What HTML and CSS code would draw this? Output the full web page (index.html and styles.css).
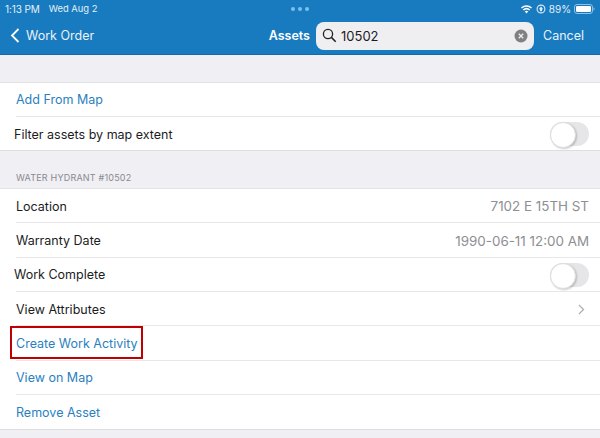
FILE: index.html
```html
<!DOCTYPE html>
<html lang="en">
<head>
<meta charset="utf-8">
<title>Assets</title>
<link rel="stylesheet" href="styles.css">
</head>
<body>
<header class="header">
  <div class="status">
    <div class="status-left"><span class="time">1:13 PM</span><span>Wed Aug 2</span></div>
    <div class="dots"><i></i><i></i><i></i></div>
    <div class="status-right">
      <svg class="wifi" width="11" height="9" viewBox="0 0 11 9"><path d="M5.500 8.600 3.800 6.600a2.600 2.600 0 0 1 3.400 0zM2.900 5.600 1.800 4.400a5.600 5.600 0 0 1 7.400 0L8.100 5.600a4 4 0 0 0-5.200 0zM.9 3.500 0 2.400a8.400 8.400 0 0 1 11 0l-.9 1.100a7 7 0 0 0-9.200 0z" fill="#fff"/></svg>
      <svg width="10" height="10" viewBox="0 0 10 10"><circle cx="5" cy="5" r="3.900" fill="none" stroke="#dcebf6" stroke-width="1.100"/><path d="M5 2.500 7.200 5.200H6V7.200H4V5.200H2.800z" fill="#dcebf6"/></svg>
      <span class="pct">89%</span>
      <svg width="21" height="10" viewBox="0 0 21 10"><rect x=".5" y=".5" width="18" height="9" rx="2.500" fill="none" stroke="#8fc0e2"/><rect x="2" y="2" width="15" height="6" rx="1.200" fill="#fff"/><path d="M19.500 3.500c.8.200 1 .8 1 1.500s-.2 1.300-1 1.500z" fill="#8fc0e2"/></svg>
    </div>
  </div>
  <nav class="nav">
    <a class="back">
      <svg width="10" height="15" viewBox="0 0 10 15"><path d="M8.500 1 2 7.500 8.500 14" fill="none" stroke="#fff" stroke-width="1.800"/></svg>
      <span>Work Order</span>
    </a>
    <div class="nav-right">
      <strong class="title">Assets</strong>
      <div class="search">
        <svg width="15" height="15" viewBox="0 0 15 15"><circle cx="6" cy="6" r="4.600" fill="none" stroke="#222" stroke-width="1.300"/><path d="m9.400 9.400 4.300 4.300" stroke="#222" stroke-width="1.500"/></svg>
        <span class="query">10502</span>
        <svg class="clear" width="14" height="14" viewBox="0 0 14 14"><circle cx="7" cy="7" r="6.500" fill="#808080"/><path d="m4.800 4.800 4.400 4.400m0-4.400-4.400 4.400" stroke="#eee" stroke-width="1.300"/></svg>
      </div>
      <span class="cancel">Cancel</span>
    </div>
  </nav>
</header>
<main class="content">
  <section class="group first">
    <div class="row"><span class="link">Add From Map</span></div>
    <div class="row tight"><span>Filter assets by map extent</span><span class="switch"></span></div>
  </section>
  <h2 class="caption">WATER HYDRANT #10502</h2>
  <section class="group">
    <div class="row"><span>Location</span><span class="value">7102 E 15TH ST</span></div>
    <div class="row"><span>Warranty Date</span><span class="value">1990-06-11 12:00 AM</span></div>
    <div class="row tight"><span>Work Complete</span><span class="switch"></span></div>
    <div class="row"><span>View Attributes</span>
      <svg class="chev" width="7" height="11" viewBox="0 0 7 11"><path d="m1 1 4.500 4.500L1 10" fill="none" stroke="#b0b0b4" stroke-width="1.300"/></svg>
    </div>
    <div class="row"><span class="link highlight">Create Work Activity</span></div>
    <div class="row"><span class="link">View on Map</span></div>
    <div class="row"><span class="link">Remove Asset</span></div>
  </section>
</main>
</body>
</html>
```
FILE: styles.css
```css
* { box-sizing: border-box; }
html, body { margin: 0; height: 100%; }
body {
  width: 600px;
  height: 438px;
  overflow: hidden;
  background: #efeff4;
  font-family: Inter, "Liberation Sans", sans-serif;
  font-size: 12.5px;
  color: #1c1c1e;
}
.header {
  height: 55px;
  background: #187bbf;
  border-bottom: 1px solid #1669a6;
  color: #fff;
  display: flex;
  flex-direction: column;
}
.status {
  height: 17px;
  padding: 1px 5px 0 5px;
  display: grid;
  grid-template-columns: 1fr auto 1fr;
  align-items: center;
  font-size: 9.4px;
  color: #e4f0f8;
}
.status-left { display: flex; gap: 9px; }
.time { font-size: 10px; letter-spacing: -.1px; }
.pct { font-size: 10px; }
.dots { display: flex; gap: 3px; }
.dots i { width: 4px; height: 4px; border-radius: 50%; background: #7cc0ee; }
.status-right { display: flex; justify-content: flex-end; align-items: center; gap: 3px; }
.wifi { margin-right: 1px; }
.nav {
  flex: 1;
  display: flex;
  justify-content: space-between;
  align-items: center;
  padding: 0 16px 0 10px;
}
.back { display: flex; align-items: center; gap: 6px; font-size: 12.5px; color: #e8f2f9; }
.nav-right { display: flex; align-items: center; }
.title { font-weight: 600; font-size: 12.5px; margin-right: 6px; }
.search {
  width: 218px;
  height: 28px;
  border-radius: 8px;
  background: #efeff2;
  display: flex;
  align-items: center;
  padding: 0 6px;
  gap: 4px;
  color: #1c1c1e;
  font-size: 13px;
}
.query { flex: 1; }
.cancel { margin-left: 9px; font-size: 12.5px; color: #e8f2f9; }
.content { display: flex; flex-direction: column; }
.group { background: #fff; border-top: 1px solid #e2e2e6; border-bottom: 1px solid #dedee2; }
.group.first { margin-top: 27px; }
.group.first .row { height: 33.7px; }
.caption {
  margin: 0;
  height: 36.8px;
  padding: 21px 16px 0;
  font-size: 9px;
  line-height: 12px;
  font-weight: 400;
  color: #8a8a8e;
  letter-spacing: .2px;
}
.row {
  height: 34.3px;
  margin-left: 16px;
  padding: 1px 11px 0 0;
  border-bottom: 1px solid #e8e8ea;
  display: flex;
  align-items: center;
  justify-content: space-between;
}
.row:last-child { border-bottom: 0; }
.row.tight > span:first-child { margin-left: -2px; }
.link { color: #2a7fbf; }
.value { color: #8e8e93; font-size: 13.4px; }
.chev { margin-right: 4px; }
.highlight { position: relative; }
.highlight::after {
  content: "";
  position: absolute;
  left: -6px;
  right: -5px;
  top: -10px;
  bottom: -8px;
  border: 2px solid #c00000;
}
.switch {
  position: relative;
  width: 39px;
  height: 24px;
  border-radius: 12px;
  background: #e6e6e8;
}
.switch::after {
  content: "";
  position: absolute;
  left: 0;
  top: 0;
  width: 24px;
  height: 24px;
  border-radius: 50%;
  background: #fff;
  border: 1px solid #ddd;
  box-shadow: 1px 1px 2px rgba(0,0,0,.2);
}
```
